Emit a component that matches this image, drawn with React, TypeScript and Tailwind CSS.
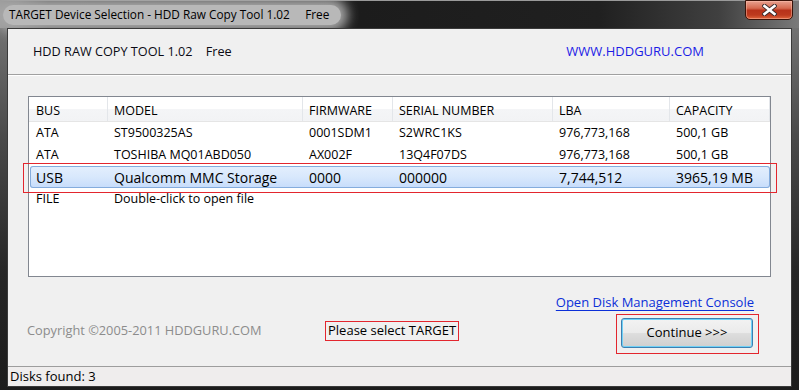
import React from "react";

const rows = [
  ["ATA", "ST9500325AS", "0001SDM1", "S2WRC1KS", "976,773,168", "500,1 GB"],
  ["ATA", "TOSHIBA MQ01ABD050", "AX002F", "13Q4F07DS", "976,773,168", "500,1 GB"],
];

const headers = ["BUS", "MODEL", "FIRMWARE", "SERIAL NUMBER", "LBA", "CAPACITY"];

export default function App() {
  return (
    <div className="w-[799px] h-[390px] overflow-hidden flex flex-col font-['Open_Sans',sans-serif] bg-[linear-gradient(to_bottom,#7c7c7c_0%,#4a4a4a_35%,#262626_70%,#1c1c1c_100%)]">
      {/* Title bar */}
      <div className="h-[28px] flex items-start bg-[linear-gradient(to_right,#9a9a9a_0%,#3a3a3a_6%,#1c1c1c_45%,#202020_75%,#404040_90%,#7a7a7a_100%)] border-t border-[#9a9a9a]">
        <div className="mt-[4px] ml-[3px] pl-[6px] pr-[12px] h-[20px] flex items-center rounded-full bg-[#b8b8b8] shadow-[0_0_12px_7px_#a8a8a8]">
          <span className="text-[11.8px] text-black whitespace-pre leading-none">
            TARGET Device Selection - HDD Raw Copy Tool 1.02     Free
          </span>
        </div>
        <div className="ml-auto mr-[6px] mt-[-1px] w-[48px] h-[20px] rounded-b-[5px] border border-[#3a1208] shadow-[inset_0_0_0_1px_rgba(255,200,180,0.45)] bg-[linear-gradient(to_bottom,#e8a190_0%,#d56a50_40%,#b8321a_52%,#bd3a1e_78%,#e0653c_100%)] flex items-center justify-center">
          <svg width="15" height="12" viewBox="0 0 15 12">
            <path d="M2.5 2 L12.5 10 M12.5 2 L2.5 10" stroke="#3a2a2a" strokeWidth="4.4" strokeLinecap="square" />
            <path d="M2.5 2 L12.5 10 M12.5 2 L2.5 10" stroke="#ffffff" strokeWidth="2.6" strokeLinecap="square" />
          </svg>
        </div>
      </div>

      {/* Client area */}
      <div className="ml-[7px] w-[785px] h-[359px] border border-[#3a3a3a] flex flex-col">
        {/* Header panel */}
        <div className="h-[46px] shrink-0 bg-[#f0f0f0] border-b border-[#a0a0a0] flex items-center">
          <span className="ml-[25px] text-[12.7px] text-[#0a0a14] whitespace-pre">
            HDD RAW COPY TOOL 1.02    Free
          </span>
          <span className="ml-auto mr-[87px] text-[13px] text-[#1c1ce6]">WWW.HDDGURU.COM</span>
        </div>

        {/* Body */}
        <div className="h-[291px] shrink-0 bg-[#f0f0f0] border-t border-white px-[20px] pt-[20px] flex flex-col">
          {/* Table */}
          <div className="relative h-[181px] shrink-0 bg-white border border-[#828790] text-[12.5px] text-black">
            <div className="h-[25px] grid grid-cols-[79px_195px_90px_160px_117px_100px] border-b border-[#e5e5e5] bg-[linear-gradient(to_bottom,#ffffff_0%,#ffffff_50%,#f4f5f7_51%,#f2f3f5_100%)]">
              {headers.map((h, i) => (
                <div
                  key={h}
                  className={`flex items-center pt-[4px] border-r border-[#e3e6ea] whitespace-nowrap ${i === 0 ? "pl-[7px]" : "pl-[6px]"}`}
                >
                  {h}
                </div>
              ))}
            </div>
            {rows.map((r, ri) => (
              <div key={ri} className="h-[22px] grid grid-cols-[79px_195px_90px_160px_117px_100px]">
                {r.map((c, i) => (
                  <div key={i} className={`flex items-center whitespace-nowrap ${i === 0 ? "pl-[7px]" : "pl-[6px]"}`}>
                    {c}
                  </div>
                ))}
              </div>
            ))}
            <div className="h-[22px] ml-[1px] w-[740px] grid grid-cols-[78px_195px_90px_160px_117px_100px] rounded-[3px] shadow-[inset_0_0_0_1px_#84acdd] bg-[linear-gradient(to_bottom,#e4effd_0%,#d8e8fc_50%,#c6dcfb_100%)] text-[14px]">
              {["USB", "Qualcomm MMC Storage", "0000", "000000", "7,744,512", "3965,19 MB"].map((c, i) => (
                <div key={i} className="flex items-center whitespace-nowrap pl-[6px]">
                  {c}
                </div>
              ))}
            </div>
            <div className="h-[22px] grid grid-cols-[79px_662px]">
              <div className="flex items-center pl-[7px]">FILE</div>
              <div className="flex items-center pl-[6px]">Double-click to open file</div>
            </div>
            <div className="absolute left-[-6px] top-[66px] w-[754px] h-[30px] border border-[#e3262e] pointer-events-none" />
          </div>

          {/* Link row */}
          <div className="mt-[16px] h-[18px] flex justify-end pr-[17px]">
            <span className="text-[13px] leading-[18px] text-[#0b2fd8] underline underline-offset-[3px] decoration-[1px]">
              Open Disk Management Console
            </span>
          </div>

          {/* Bottom row */}
          <div className="mt-[3px] flex items-start">
            <div className="w-[298px] ml-[-1px] mt-[7px] h-[20px] flex items-center text-[12.8px] text-[#8c8c8c] whitespace-nowrap">
              Copyright ©2005-2011 HDDGURU.COM
            </div>
            <div className="mt-[7px] w-[134px] h-[20px] border border-[#e3262e] pl-[2px] flex items-center text-[13px] text-black whitespace-nowrap">
              Please select TARGET
            </div>
            <div className="ml-auto mr-[12px] w-[143px] h-[40px] border border-[#e3262e] pl-[4px] pt-[3px]">
              <div className="w-[132px] h-[30px] rounded-[3px] border border-[#3c7fb1] shadow-[inset_0_0_0_1px_#6fd0f6] bg-[linear-gradient(to_bottom,#f2f2f2_0%,#ebebeb_48%,#dddddd_52%,#cfcfcf_100%)] flex items-center justify-center text-[13px] text-black">
                Continue &gt;&gt;&gt;
              </div>
            </div>
          </div>
        </div>

        {/* Status bar */}
        <div className="h-[20px] shrink-0 bg-[#efeded] border-t border-[#9d9d9d] flex items-center pl-[2px] text-[13px] text-black">
          Disks found: 3
        </div>
      </div>
    </div>
  );
}
